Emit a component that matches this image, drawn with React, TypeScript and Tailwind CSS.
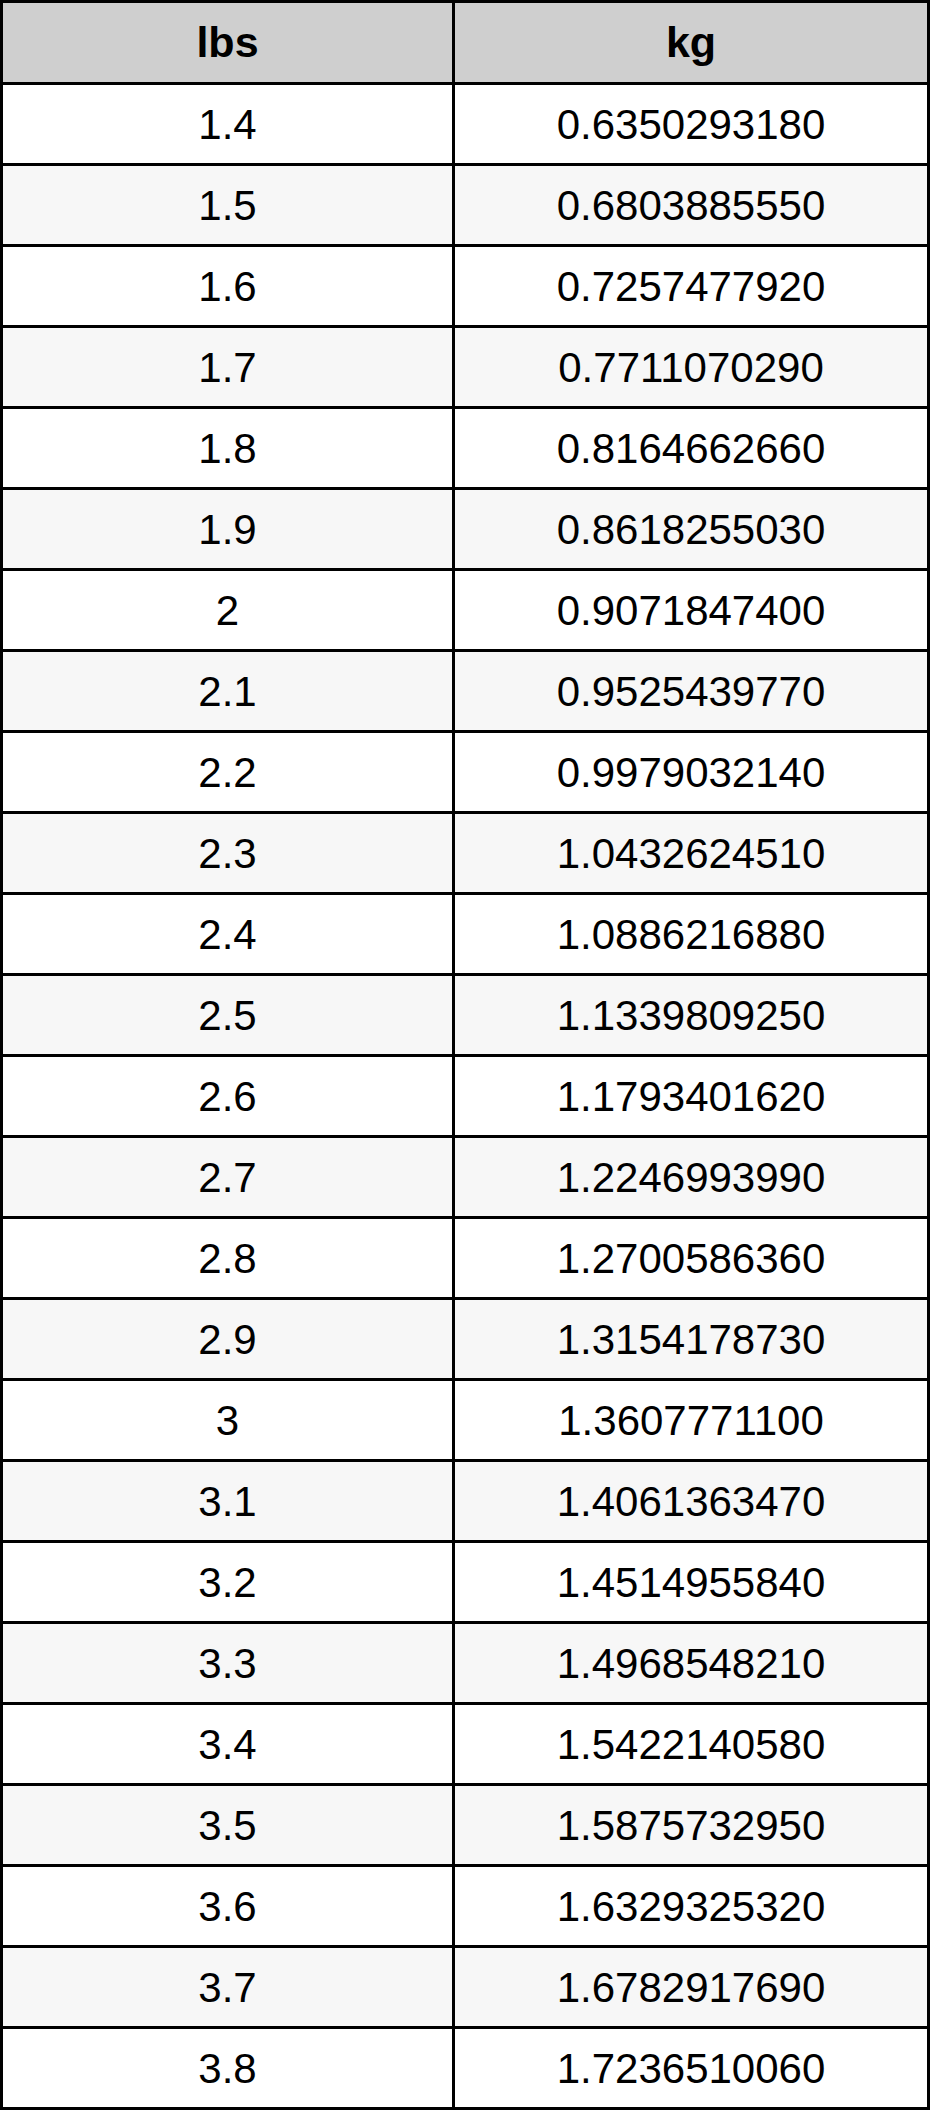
const rows: [string, string][] = [
  ['1.4', '0.6350293180'],
  ['1.5', '0.6803885550'],
  ['1.6', '0.7257477920'],
  ['1.7', '0.7711070290'],
  ['1.8', '0.8164662660'],
  ['1.9', '0.8618255030'],
  ['2', '0.9071847400'],
  ['2.1', '0.9525439770'],
  ['2.2', '0.9979032140'],
  ['2.3', '1.0432624510'],
  ['2.4', '1.0886216880'],
  ['2.5', '1.1339809250'],
  ['2.6', '1.1793401620'],
  ['2.7', '1.2246993990'],
  ['2.8', '1.2700586360'],
  ['2.9', '1.3154178730'],
  ['3', '1.3607771100'],
  ['3.1', '1.4061363470'],
  ['3.2', '1.4514955840'],
  ['3.3', '1.4968548210'],
  ['3.4', '1.5422140580'],
  ['3.5', '1.5875732950'],
  ['3.6', '1.6329325320'],
  ['3.7', '1.6782917690'],
  ['3.8', '1.7236510060'],
]

export default function App() {
  return (
    <div className="w-[930px] bg-white font-['Liberation_Sans',Arial,sans-serif] text-black">
      <div className="border-[3px] border-black">
        <div className="grid grid-cols-[452px_1fr] h-[79px] bg-[#cfcfcf] text-[43px] font-bold">
          <div className="flex items-center justify-center border-r-[3px] border-black">lbs</div>
          <div className="flex items-center justify-center">kg</div>
        </div>
        {rows.map(([lbs, kg], i) => (
          <div
            key={lbs}
            className={`grid grid-cols-[452px_1fr] h-[81px] border-t-[3px] border-black text-[42px] ${
              i % 2 === 1 ? 'bg-[#f7f7f7]' : 'bg-white'
            }`}
          >
            <div className="flex items-center justify-center border-r-[3px] border-black">{lbs}</div>
            <div className="flex items-center justify-center">{kg}</div>
          </div>
        ))}
      </div>
    </div>
  )
}
